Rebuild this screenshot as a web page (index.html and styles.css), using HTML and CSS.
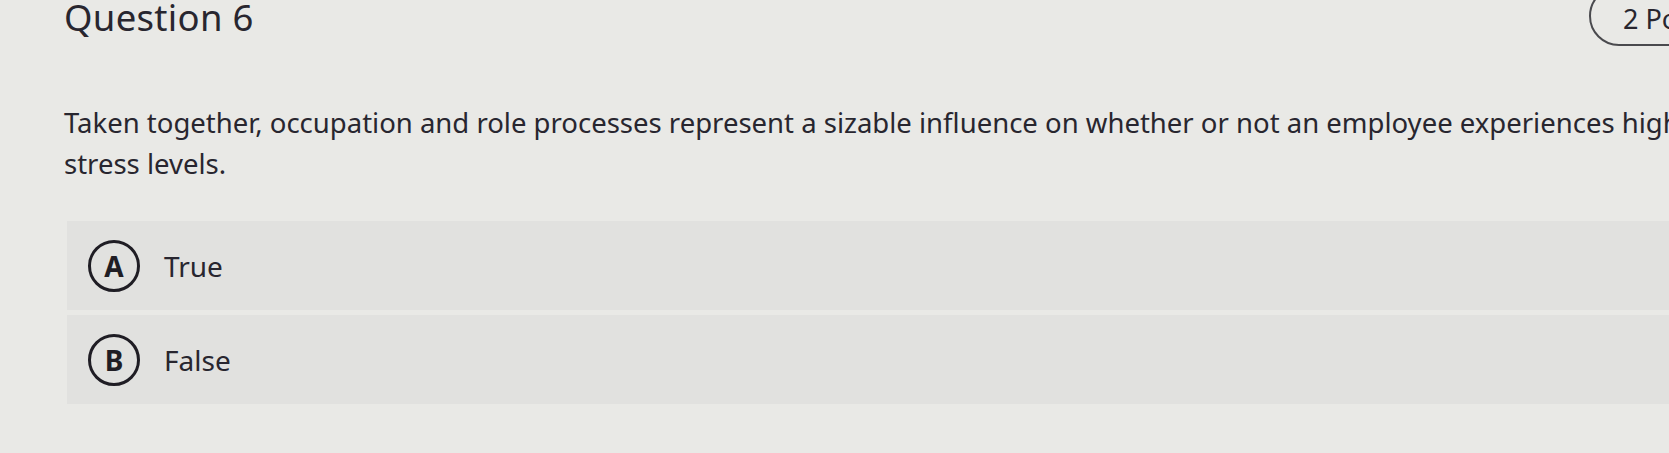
FILE: index.html
```html
<!DOCTYPE html>
<html lang="en">
<head>
<meta charset="utf-8">
<title>Question 6</title>
<link rel="stylesheet" href="styles.css">
</head>
<body>
<main class="quiz">
  <section class="question">
    <header class="q-head">
      <h2 class="q-title">Question 6</h2>
      <div class="q-points">2 Points</div>
    </header>
    <p class="q-text">Taken together, occupation and role processes represent a sizable influence on whether or not an employee experiences high stress levels.</p>
    <ul class="choices">
      <li class="choice">
        <span class="choice-key">A</span>
        <span class="choice-label">True</span>
      </li>
      <li class="choice">
        <span class="choice-key">B</span>
        <span class="choice-label">False</span>
      </li>
    </ul>
  </section>
</main>
</body>
</html>
```

FILE: styles.css
```css
html, body {
  margin: 0;
  padding: 0;
}

body {
  width: 1669px;
  height: 453px;
  overflow: hidden;
  background: #e9e9e6;
  font-family: "Noto Sans", "Open Sans", sans-serif;
  color: #28262f;
}

.quiz {
  width: 1760px;
  padding-left: 64px;
}

/* title on the left, points pill starting at a fixed column */
.q-head {
  display: grid;
  grid-template-columns: 1525px auto;
  align-items: start;
  height: 48px;
  margin-top: -4px;
}

.q-title {
  margin: 0;
  font-size: 36.5px;
  font-weight: 400;
  line-height: 42px;
  letter-spacing: 0.3px;
}

.q-points {
  margin-top: -10px;
  height: 60px;
  box-sizing: border-box;
  padding: 14px 30px 0 32px;
  border: 2px solid #4a4a4e;
  border-radius: 30px;
  font-size: 27px;
  line-height: 34px;
  white-space: nowrap;
}

.q-text {
  margin: 58px 0 0;
  width: 1640px;
  font-size: 27.5px;
  line-height: 41px;
}

.choices {
  list-style: none;
  margin: 37px 0 0 3px;
  padding: 0;
  display: flex;
  flex-direction: column;
  gap: 5px;
}

.choice {
  display: flex;
  align-items: center;
  height: 89px;
  padding-left: 21px;
  background: #e1e1df;
}

.choice-key {
  flex: none;
  width: 52px;
  height: 52px;
  box-sizing: border-box;
  border: 3px solid #1f1d24;
  border-radius: 50%;
  display: flex;
  align-items: center;
  justify-content: center;
  font-size: 28px;
  font-weight: 700;
  color: #1f1d24;
}

.choice-label {
  margin-left: 24px;
  font-size: 28px;
}
```
